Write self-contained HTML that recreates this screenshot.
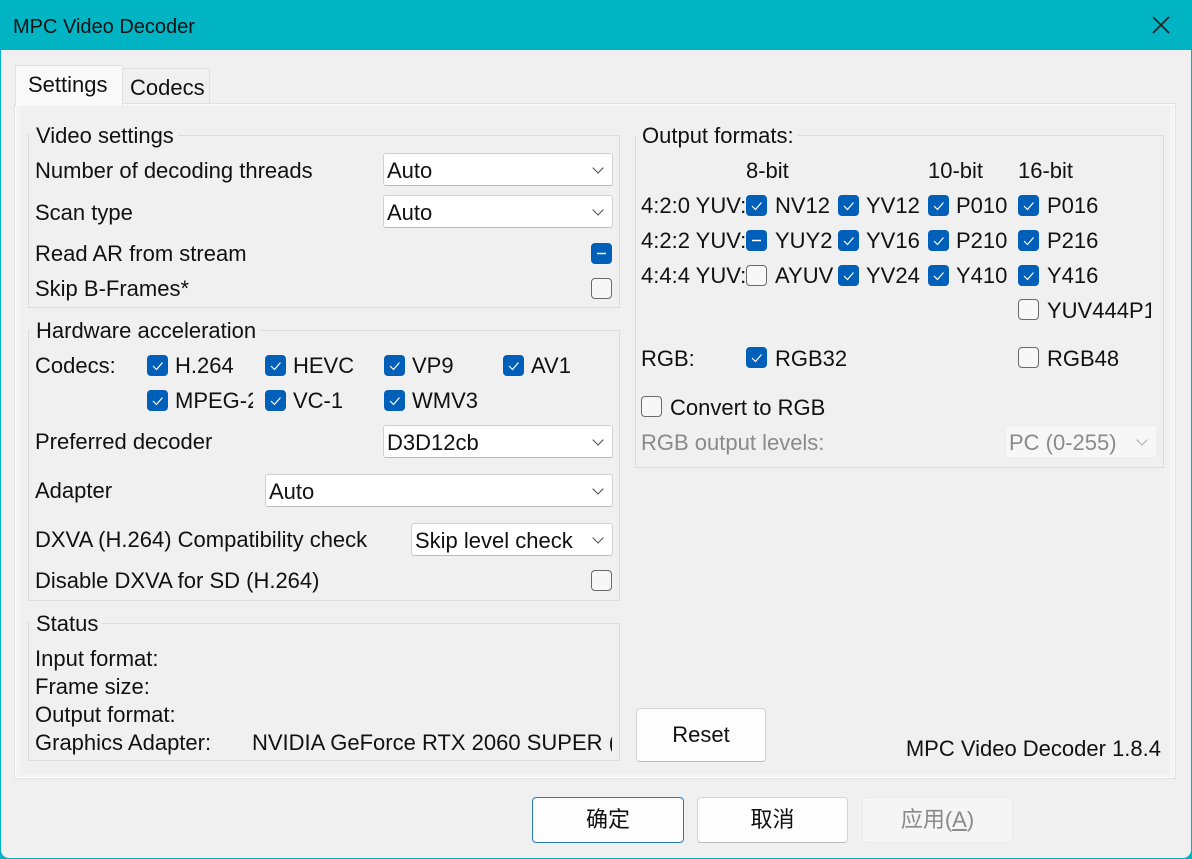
<!DOCTYPE html>
<html><head><meta charset="utf-8"><style>
*{box-sizing:border-box;margin:0;padding:0}
body{width:1192px;height:859px;background:#00b4c4;font-family:"Liberation Sans","Noto Sans CJK SC",sans-serif;font-size:22px;color:#111;position:relative;overflow:hidden}
#win{position:absolute;left:1px;top:50px;width:1190px;height:808px;background:#f0f0f0;border-radius:0 0 8px 8px}
.a{position:absolute;white-space:nowrap;line-height:28px;height:28px}
.g{color:#8a8a8a}
.box{position:absolute;border:1px solid #dcdcdc}
.gt{position:absolute;background:#f0f0f0;padding:0 4px 0 6px;line-height:28px}
.cb{position:absolute;width:21px;height:21px;border-radius:4px;background:#005fb8;}
.cb svg{position:absolute;left:0;top:0}
.cb.u{background:#f7f7f7;border:1.5px solid #6a6a6a}
.combo{position:absolute;background:#fff;border:1px solid #d0d0d0;border-bottom-color:#bbb;border-radius:3px;padding-left:3px;line-height:33px}
.combo:after{content:"";position:absolute;right:10px;top:10px;width:7px;height:7px;border-right:1.3px solid #444;border-bottom:1.3px solid #444;transform:rotate(45deg)}
.combo.dis{background:#f7f7f7;border-color:#eee;color:#8a8a8a}
.combo.dis:after{border-color:#aaa}
.btn{position:absolute;background:#fdfdfd;border:1px solid #d4d4d4;border-bottom-color:#bdbdbd;border-radius:4px;text-align:center}
</style></head><body>
<div class="a" style="left:13px;top:13px;font-size:20px;color:#111">MPC Video Decoder</div>
<svg style="position:absolute;left:1152px;top:16px" width="18" height="18"><path d="M1 1L17 17M17 1L1 17" stroke="#222" stroke-width="1.6"/></svg>
<div id="win"></div>
<div style="position:absolute;left:122px;top:68px;width:88px;height:37px;background:#f0f0f0;border:1px solid #e0e0e0;border-bottom:none"></div>
<div style="position:absolute;left:15px;top:104px;width:1160px;height:674px;background:#f4f4f4;border:1px solid #fbfbfb;outline:1px solid #e2e2e2"></div>
<div style="position:absolute;left:15px;top:65px;width:108px;height:41px;background:#f9f9f9;border:1px solid #e2e2e2;border-bottom:none"></div>
<div class="a" style="left:28px;top:71px">Settings</div>
<div class="a" style="left:130px;top:74px">Codecs</div>
<div style="position:absolute;left:20px;top:106px;width:1150px;height:668px;background:#f0f0f0"></div>

<div class="box" style="left:28px;top:135px;width:592px;height:173px"></div>
<div class="gt" style="left:30px;top:122px">Video settings</div>
<div class="a" style="left:35px;top:157px">Number of decoding threads</div>
<div class="combo" style="left:383px;top:153px;width:230px;height:33px">Auto</div>
<div class="a" style="left:35px;top:199px">Scan type</div>
<div class="combo" style="left:383px;top:195px;width:230px;height:33px">Auto</div>
<div class="a" style="left:35px;top:240px">Read AR from stream</div>
<div class="cb" style="left:591px;top:243px"><svg width="21" height="21"><path d="M6 10.5H15" stroke="#fff" stroke-width="1.5"/></svg></div>
<div class="a" style="left:35px;top:275px">Skip B-Frames*</div>
<div class="cb u" style="left:591px;top:278px"></div>

<div class="box" style="left:28px;top:330px;width:592px;height:271px"></div>
<div class="gt" style="left:30px;top:317px">Hardware acceleration</div>
<div class="a" style="left:35px;top:352px">Codecs:</div>
<div class="cb" style="left:147px;top:355px"><svg width="21" height="21"><path d="M6 11L9.5 14.5L15.5 7.5" stroke="#fff" stroke-width="1.2" fill="none"/></svg></div><div class="a" style="left:175px;top:352px">H.264</div>
<div class="cb" style="left:265px;top:355px"><svg width="21" height="21"><path d="M6 11L9.5 14.5L15.5 7.5" stroke="#fff" stroke-width="1.2" fill="none"/></svg></div><div class="a" style="left:293px;top:352px">HEVC</div>
<div class="cb" style="left:384px;top:355px"><svg width="21" height="21"><path d="M6 11L9.5 14.5L15.5 7.5" stroke="#fff" stroke-width="1.2" fill="none"/></svg></div><div class="a" style="left:412px;top:352px">VP9</div>
<div class="cb" style="left:503px;top:355px"><svg width="21" height="21"><path d="M6 11L9.5 14.5L15.5 7.5" stroke="#fff" stroke-width="1.2" fill="none"/></svg></div><div class="a" style="left:531px;top:352px">AV1</div>
<div class="cb" style="left:147px;top:390px"><svg width="21" height="21"><path d="M6 11L9.5 14.5L15.5 7.5" stroke="#fff" stroke-width="1.2" fill="none"/></svg></div><div class="a" style="left:175px;top:387px;width:78px;overflow:hidden">MPEG-2</div>
<div class="cb" style="left:265px;top:390px"><svg width="21" height="21"><path d="M6 11L9.5 14.5L15.5 7.5" stroke="#fff" stroke-width="1.2" fill="none"/></svg></div><div class="a" style="left:293px;top:387px">VC-1</div>
<div class="cb" style="left:384px;top:390px"><svg width="21" height="21"><path d="M6 11L9.5 14.5L15.5 7.5" stroke="#fff" stroke-width="1.2" fill="none"/></svg></div><div class="a" style="left:412px;top:387px">WMV3</div>
<div class="a" style="left:35px;top:428px">Preferred decoder</div>
<div class="combo" style="left:383px;top:425px;width:230px;height:33px">D3D12cb</div>
<div class="a" style="left:35px;top:477px">Adapter</div>
<div class="combo" style="left:265px;top:474px;width:348px;height:33px">Auto</div>
<div class="a" style="left:35px;top:526px">DXVA (H.264) Compatibility check</div>
<div class="combo" style="left:411px;top:523px;width:202px;height:33px;overflow:hidden">Skip level check</div>
<div class="a" style="left:35px;top:567px">Disable DXVA for SD (H.264)</div>
<div class="cb u" style="left:591px;top:570px"></div>

<div class="box" style="left:28px;top:623px;width:592px;height:138px"></div>
<div class="gt" style="left:30px;top:610px">Status</div>
<div class="a" style="left:35px;top:645px">Input format:</div>
<div class="a" style="left:35px;top:673px">Frame size:</div>
<div class="a" style="left:35px;top:701px">Output format:</div>
<div class="a" style="left:35px;top:729px">Graphics Adapter:</div>
<div class="a" style="left:252px;top:729px;width:360px;overflow:hidden">NVIDIA GeForce RTX 2060 SUPER (1</div>

<div class="box" style="left:635px;top:135px;width:529px;height:333px"></div>
<div class="gt" style="left:636px;top:122px">Output formats:</div>
<div class="a" style="left:746px;top:157px">8-bit</div>
<div class="a" style="left:928px;top:157px">10-bit</div>
<div class="a" style="left:1018px;top:157px">16-bit</div>
<div class="a" style="left:641px;top:192px;width:104px;overflow:hidden">4:2:0 YUV:</div>
<div class="a" style="left:641px;top:227px;width:104px;overflow:hidden">4:2:2 YUV:</div>
<div class="a" style="left:641px;top:262px;width:104px;overflow:hidden">4:4:4 YUV:</div>
<div class="a" style="left:641px;top:345px">RGB:</div>

<div class="cb" style="left:746px;top:195px"><svg width="21" height="21"><path d="M6 11L9.5 14.5L15.5 7.5" stroke="#fff" stroke-width="1.2" fill="none"/></svg></div><div class="a" style="left:775px;top:192px">NV12</div>
<div class="cb" style="left:838px;top:195px"><svg width="21" height="21"><path d="M6 11L9.5 14.5L15.5 7.5" stroke="#fff" stroke-width="1.2" fill="none"/></svg></div><div class="a" style="left:866px;top:192px">YV12</div>
<div class="cb" style="left:928px;top:195px"><svg width="21" height="21"><path d="M6 11L9.5 14.5L15.5 7.5" stroke="#fff" stroke-width="1.2" fill="none"/></svg></div><div class="a" style="left:956px;top:192px">P010</div>
<div class="cb" style="left:1018px;top:195px"><svg width="21" height="21"><path d="M6 11L9.5 14.5L15.5 7.5" stroke="#fff" stroke-width="1.2" fill="none"/></svg></div><div class="a" style="left:1047px;top:192px">P016</div>

<div class="cb" style="left:746px;top:230px"><svg width="21" height="21"><path d="M6 10.5H15" stroke="#fff" stroke-width="1.5"/></svg></div><div class="a" style="left:775px;top:227px">YUY2</div>
<div class="cb" style="left:838px;top:230px"><svg width="21" height="21"><path d="M6 11L9.5 14.5L15.5 7.5" stroke="#fff" stroke-width="1.2" fill="none"/></svg></div><div class="a" style="left:866px;top:227px">YV16</div>
<div class="cb" style="left:928px;top:230px"><svg width="21" height="21"><path d="M6 11L9.5 14.5L15.5 7.5" stroke="#fff" stroke-width="1.2" fill="none"/></svg></div><div class="a" style="left:956px;top:227px">P210</div>
<div class="cb" style="left:1018px;top:230px"><svg width="21" height="21"><path d="M6 11L9.5 14.5L15.5 7.5" stroke="#fff" stroke-width="1.2" fill="none"/></svg></div><div class="a" style="left:1047px;top:227px">P216</div>

<div class="cb u" style="left:746px;top:265px"></div><div class="a" style="left:775px;top:262px;width:60px;overflow:hidden">AYUV</div>
<div class="cb" style="left:838px;top:265px"><svg width="21" height="21"><path d="M6 11L9.5 14.5L15.5 7.5" stroke="#fff" stroke-width="1.2" fill="none"/></svg></div><div class="a" style="left:866px;top:262px">YV24</div>
<div class="cb" style="left:928px;top:265px"><svg width="21" height="21"><path d="M6 11L9.5 14.5L15.5 7.5" stroke="#fff" stroke-width="1.2" fill="none"/></svg></div><div class="a" style="left:956px;top:262px">Y410</div>
<div class="cb" style="left:1018px;top:265px"><svg width="21" height="21"><path d="M6 11L9.5 14.5L15.5 7.5" stroke="#fff" stroke-width="1.2" fill="none"/></svg></div><div class="a" style="left:1047px;top:262px">Y416</div>

<div class="cb u" style="left:1018px;top:299px"></div><div class="a" style="left:1047px;top:297px;width:104px;overflow:hidden">YUV444P1</div>
<div class="cb" style="left:746px;top:347px"><svg width="21" height="21"><path d="M6 11L9.5 14.5L15.5 7.5" stroke="#fff" stroke-width="1.2" fill="none"/></svg></div><div class="a" style="left:775px;top:345px">RGB32</div>
<div class="cb u" style="left:1018px;top:347px"></div><div class="a" style="left:1047px;top:345px">RGB48</div>

<div class="cb u" style="left:641px;top:396px"></div><div class="a" style="left:670px;top:394px">Convert to RGB</div>
<div class="a g" style="left:641px;top:429px">RGB output levels:</div>
<div class="combo dis" style="left:1005px;top:425px;width:152px;height:33px">PC (0-255)</div>

<div class="btn" style="left:636px;top:708px;width:130px;height:54px;line-height:52px">Reset</div>
<div class="a" style="right:31px;top:735px">MPC Video Decoder 1.8.4</div>

<div class="btn" style="left:532px;top:797px;width:152px;height:46px;line-height:44px;border:1px solid #2a7ab8">确定</div>
<div class="btn" style="left:697px;top:797px;width:151px;height:46px;line-height:44px">取消</div>
<div class="btn" style="left:862px;top:797px;width:151px;height:46px;line-height:44px;background:#f5f5f5;border-color:#e8e8e8;color:#8a8a8a">应用(<u>A</u>)</div>
</body></html>
